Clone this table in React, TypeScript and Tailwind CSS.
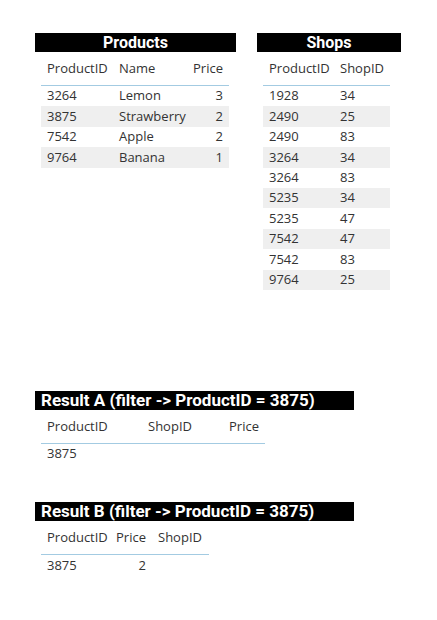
import React from "react";

const font = { fontFamily: '"Open Sans", "Noto Sans", sans-serif' };

function TitleBar({ text, width, center, size }: { text: string; width: string; center?: boolean; size: string }) {
  return (
    <div
      className={`${width} h-[19px] bg-black text-white font-bold flex items-center ${center ? "justify-center" : "justify-start pl-[6px]"} ${size} leading-none`}
      style={{ fontFamily: 'Roboto, "Liberation Sans", sans-serif' }}
    >
      {text}
    </div>
  );
}

type Col = { w: string; right?: boolean };

function Table({
  cols,
  head,
  rows,
  width,
  striped = true,
}: {
  cols: Col[];
  head: string[];
  rows: string[][];
  width: string;
  striped?: boolean;
}) {
  return (
    <div className={`${width} text-[13px] text-[#333333]`} style={font}>
      <div className="flex h-[33px] items-center">
        {head.map((h, i) => (
          <div key={i} className={`${cols[i].w} shrink-0 ${cols[i].right ? "text-right pr-[6px]" : "pl-[6px]"} whitespace-nowrap`}>
            {h}
          </div>
        ))}
      </div>
      <div className="h-px bg-[#a3cbe2]" />
      {rows.map((r, ri) => (
        <div key={ri} className={`flex h-[20.4px] items-center ${striped && ri % 2 === 1 ? "bg-[#efefef]" : ""}`}>
          {r.map((c, ci) => (
            <div key={ci} className={`${cols[ci].w} shrink-0 ${cols[ci].right ? "text-right pr-[6px]" : "pl-[6px]"} whitespace-nowrap`}>
              {c}
            </div>
          ))}
        </div>
      ))}
    </div>
  );
}

export default function App() {
  return (
    <div className="w-[437px] h-[620px] bg-white pt-[33px] pl-[35px]">
      <div className="flex gap-[21px] items-start">
        <div className="w-[201px]">
          <TitleBar text="Products" width="w-[201px]" center size="text-[16px]" />
          <div className="pl-[6px]">
            <Table
              width="w-[188px]"
              cols={[{ w: "w-[72px]" }, { w: "w-[78px]" }, { w: "w-[38px]", right: true }]}
              head={["ProductID", "Name", "Price"]}
              rows={[
                ["3264", "Lemon", "3"],
                ["3875", "Strawberry", "2"],
                ["7542", "Apple", "2"],
                ["9764", "Banana", "1"],
              ]}
            />
          </div>
        </div>
        <div className="w-[144px]">
          <TitleBar text="Shops" width="w-[144px]" center size="text-[16px]" />
          <div className="pl-[6px]">
            <Table
              width="w-[127px]"
              cols={[{ w: "w-[71px]" }, { w: "w-[56px]" }]}
              head={["ProductID", "ShopID"]}
              rows={[
                ["1928", "34"],
                ["2490", "25"],
                ["2490", "83"],
                ["3264", "34"],
                ["3264", "83"],
                ["5235", "34"],
                ["5235", "47"],
                ["7542", "47"],
                ["7542", "83"],
                ["9764", "25"],
              ]}
            />
          </div>
        </div>
      </div>

      <div className="mt-[101px]">
        <TitleBar text="Result A (filter -> ProductID = 3875)" width="w-[319px]" size="text-[17px]" />
        <div className="pl-[6px]">
          <Table
            width="w-[224px]"
            striped={false}
            cols={[{ w: "w-[101px]" }, { w: "w-[73px]" }, { w: "w-[50px]", right: true }]}
            head={["ProductID", "ShopID", "Price"]}
            rows={[["3875", "", ""]]}
          />
        </div>
      </div>

      <div className="mt-[38px]">
        <TitleBar text="Result B (filter -> ProductID = 3875)" width="w-[319px]" size="text-[17px]" />
        <div className="pl-[6px]">
          <Table
            width="w-[168px]"
            striped={false}
            cols={[{ w: "w-[70px]" }, { w: "w-[41px]", right: true }, { w: "w-[57px]" }]}
            head={["ProductID", "Price", "ShopID"]}
            rows={[["3875", "2", ""]]}
          />
        </div>
      </div>
    </div>
  );
}
